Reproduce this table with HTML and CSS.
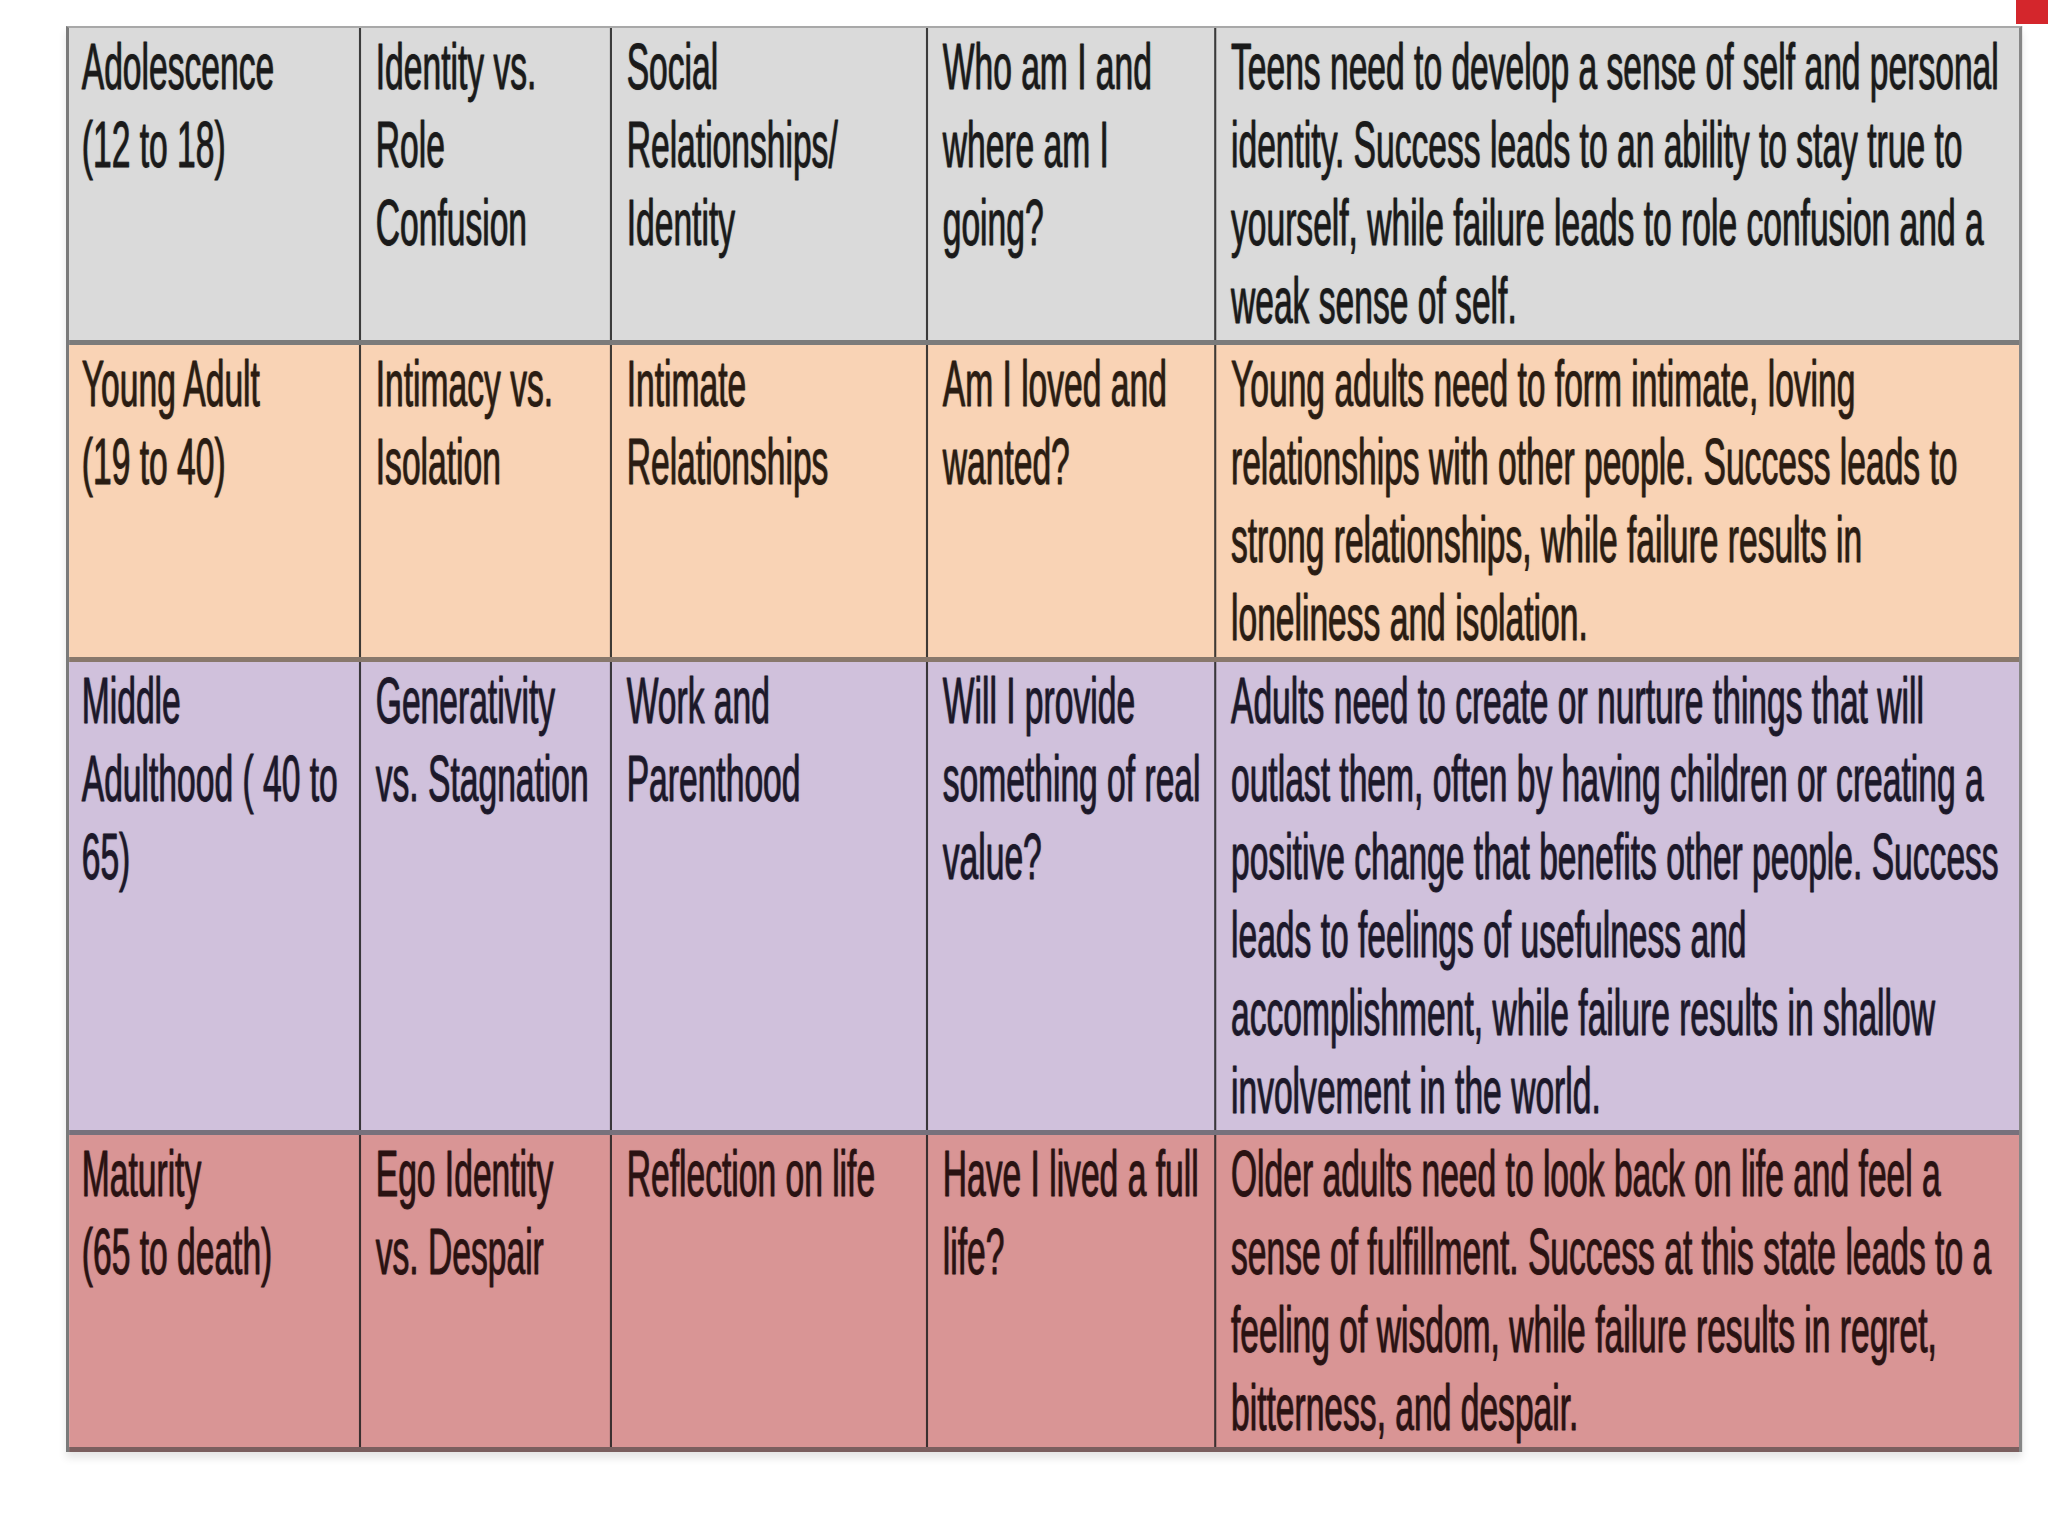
FILE: index.html
```html
<!DOCTYPE html>
<html lang="en">
<head>
<meta charset="utf-8">
<title>Erikson stages table</title>
<link rel="stylesheet" href="styles.css">
</head>
<body>
<div class="corner-mark"></div>
<main class="page">
  <div class="frame">
    <div class="table">
      <div class="row row-grey">
        <div class="cell">Adolescence<br>(12 to 18)</div>
        <div class="cell">Identity vs.<br>Role<br>Confusion</div>
        <div class="cell">Social<br>Relationships/<br>Identity</div>
        <div class="cell">Who am I and<br>where am I<br>going?</div>
        <div class="cell">Teens need to develop a sense of self and personal<br>identity. Success leads to an ability to stay true to<br>yourself, while failure leads to role confusion and a<br>weak sense of self.</div>
      </div>
      <div class="row row-peach">
        <div class="cell">Young Adult<br>(19 to 40)</div>
        <div class="cell">Intimacy vs.<br>Isolation</div>
        <div class="cell">Intimate<br>Relationships</div>
        <div class="cell">Am I loved and<br>wanted?</div>
        <div class="cell">Young adults need to form intimate, loving<br>relationships with other people. Success leads to<br>strong relationships, while failure results in<br>loneliness and isolation.</div>
      </div>
      <div class="row row-lilac">
        <div class="cell">Middle<br>Adulthood ( 40 to<br>65)</div>
        <div class="cell">Generativity<br>vs. Stagnation</div>
        <div class="cell">Work and<br>Parenthood</div>
        <div class="cell">Will I provide<br>something of real<br>value?</div>
        <div class="cell">Adults need to create or nurture things that will<br>outlast them, often by having children or creating a<br>positive change that benefits other people. Success<br>leads to feelings of usefulness and<br>accomplishment, while failure results in shallow<br>involvement in the world.</div>
      </div>
      <div class="row row-rose">
        <div class="cell">Maturity<br>(65 to death)</div>
        <div class="cell">Ego Identity<br>vs. Despair</div>
        <div class="cell">Reflection on life</div>
        <div class="cell">Have I lived a full<br>life?</div>
        <div class="cell">Older adults need to look back on life and feel a<br>sense of fulfillment. Success at this state leads to a<br>feeling of wisdom, while failure results in regret,<br>bitterness, and despair.</div>
      </div>
    </div>
  </div>
</main>
</body>
</html>
```

FILE: styles.css
```css
html, body {
  margin: 0;
  padding: 0;
  background: #ffffff;
  overflow: hidden;
}

body {
  width: 2048px;
  height: 1536px;
  position: relative;
  font-family: "Liberation Sans", Arial, sans-serif;
}

.corner-mark {
  position: absolute;
  top: 0;
  right: 0;
  width: 32px;
  height: 24px;
  background: #d4262c;
}

.page {
  padding-top: 26px;
  padding-left: 66px;
}

.frame {
  width: 1956px;
  box-shadow: 0 6px 8px rgba(0, 0, 0, 0.10);
}

.table {
  width: 3726px;
  transform: scaleX(0.525);
  transform-origin: 0 0;
  border-left: 6px solid #7a7a7a;
  border-right: 6px solid #868686;
  border-top: 2px solid #a8a8a8;
  box-sizing: border-box;
}

.row {
  display: grid;
  grid-template-columns: 552px 478px 602px 549px 1533px;
  border-bottom: 5px solid rgba(60, 60, 60, 0.6);
}

.row-grey { background: #dadada; }
.row-peach { background: #f9d3b5; }
.row-lilac { background: #d0c1dc; }
.row-rose { background: #d99595; }

.cell {
  font-size: 64px;
  line-height: 78px;
  color: #1a1a1a;
  white-space: nowrap;
  padding: 0 0 0 28px;
  border-left: 4px solid rgba(30, 30, 30, 0.85);
  text-shadow: 0 0 2px rgba(0, 0, 0, 0.45);
  -webkit-text-stroke: 0.8px currentColor;
  overflow: hidden;
}

.cell:first-child {
  border-left: none;
  padding-left: 24px;
}

.row-rose .cell { color: #2a1212; }
.row-peach .cell { color: #2a1c12; }
.row-lilac .cell { color: #1c182a; }
```
